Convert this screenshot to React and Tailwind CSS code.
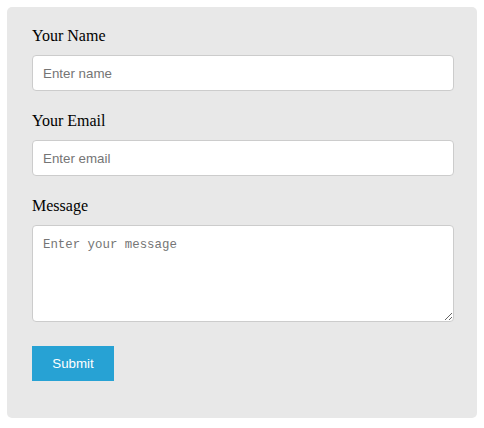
import React from "react";

export default function App() {
  return (
    <div className="w-[484px] h-[428px] bg-white pt-[7px] pl-[7px]">
      <form
        className="w-[470px] h-[411px] bg-[#e8e8e8] rounded-[5px] pt-[20px] pl-[25px] flex flex-col"
        onSubmit={(e) => e.preventDefault()}
      >
        <label className="block h-[18px] leading-[18px] mb-[10px] text-[16px] text-black font-['Liberation_Serif',serif]">
          Your Name
        </label>
        <input
          type="text"
          placeholder="Enter name"
          className="w-[422px] h-[36px] mb-[21px] bg-white border border-[#cccccc] rounded-[4px] px-[10px] text-[13.33px] font-['Liberation_Sans',Arial,sans-serif] placeholder:text-[#757575] outline-none"
        />
        <label className="block h-[18px] leading-[18px] mb-[10px] text-[16px] text-black font-['Liberation_Serif',serif]">
          Your Email
        </label>
        <input
          type="email"
          placeholder="Enter email"
          className="w-[422px] h-[36px] mb-[21px] bg-white border border-[#cccccc] rounded-[4px] px-[10px] text-[13.33px] font-['Liberation_Sans',Arial,sans-serif] placeholder:text-[#757575] outline-none"
        />
        <label className="block h-[18px] leading-[18px] mb-[10px] text-[16px] text-black font-['Liberation_Serif',serif]">
          Message
        </label>
        <textarea
          placeholder="Enter your message"
          className="block w-[422px] h-[97px] mb-[24px] bg-white border border-[#cccccc] rounded-[4px] px-[10px] pt-[12px] pb-[8px] text-[12.4px] leading-[15px] font-['Liberation_Mono',monospace] placeholder:text-[#757575] outline-none resize"
        />
        <button
          type="submit"
          className="w-[82px] h-[35px] bg-[#27a2d4] text-white text-[13.33px] font-['Liberation_Sans',Arial,sans-serif] flex items-center justify-center"
        >
          Submit
        </button>
      </form>
    </div>
  );
}
